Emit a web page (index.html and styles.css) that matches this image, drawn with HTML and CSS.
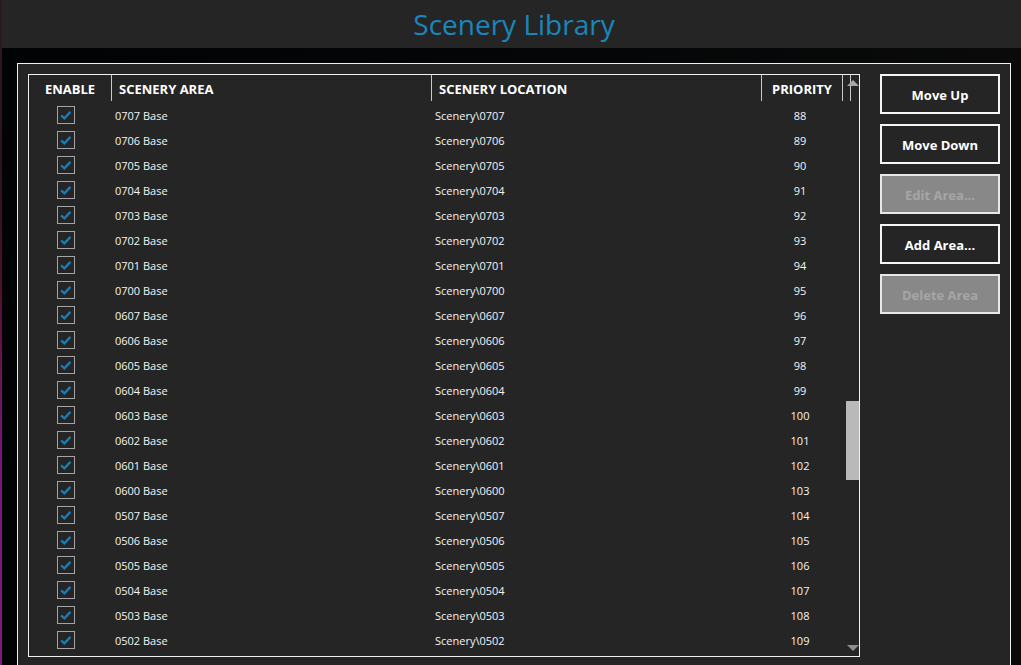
FILE: index.html
```html
<!DOCTYPE html>
<html lang="en">
<head>
<meta charset="utf-8">
<title>Scenery Library</title>
<link rel="stylesheet" href="styles.css">
</head>
<body>
<div class="window">
  <div class="edge"></div>
  <div class="main">
    <header class="titlebar"><h1 class="title">Scenery Library</h1></header>
    <div class="stage">
      <div class="panel">
        <div class="table">
          <div class="grid">
            <div class="thead">
              <div class="th center">ENABLE</div>
              <div class="th">SCENERY AREA</div>
              <div class="th">SCENERY LOCATION</div>
              <div class="th center">PRIORITY</div>
              <div class="th"></div>
            </div>
            <div class="tbody">
              <div class="tr"><div class="td chk"><span class="cb"><svg viewBox="0 0 18 18"><polyline points="3.5,9.5 7.2,12.8 14,5.5"/></svg></span></div><div class="td">0707 Base</div><div class="td">Scenery\0707</div><div class="td pri">88</div></div>
              <div class="tr"><div class="td chk"><span class="cb"><svg viewBox="0 0 18 18"><polyline points="3.5,9.5 7.2,12.8 14,5.5"/></svg></span></div><div class="td">0706 Base</div><div class="td">Scenery\0706</div><div class="td pri">89</div></div>
              <div class="tr"><div class="td chk"><span class="cb"><svg viewBox="0 0 18 18"><polyline points="3.5,9.5 7.2,12.8 14,5.5"/></svg></span></div><div class="td">0705 Base</div><div class="td">Scenery\0705</div><div class="td pri">90</div></div>
              <div class="tr"><div class="td chk"><span class="cb"><svg viewBox="0 0 18 18"><polyline points="3.5,9.5 7.2,12.8 14,5.5"/></svg></span></div><div class="td">0704 Base</div><div class="td">Scenery\0704</div><div class="td pri">91</div></div>
              <div class="tr"><div class="td chk"><span class="cb"><svg viewBox="0 0 18 18"><polyline points="3.5,9.5 7.2,12.8 14,5.5"/></svg></span></div><div class="td">0703 Base</div><div class="td">Scenery\0703</div><div class="td pri">92</div></div>
              <div class="tr"><div class="td chk"><span class="cb"><svg viewBox="0 0 18 18"><polyline points="3.5,9.5 7.2,12.8 14,5.5"/></svg></span></div><div class="td">0702 Base</div><div class="td">Scenery\0702</div><div class="td pri">93</div></div>
              <div class="tr"><div class="td chk"><span class="cb"><svg viewBox="0 0 18 18"><polyline points="3.5,9.5 7.2,12.8 14,5.5"/></svg></span></div><div class="td">0701 Base</div><div class="td">Scenery\0701</div><div class="td pri">94</div></div>
              <div class="tr"><div class="td chk"><span class="cb"><svg viewBox="0 0 18 18"><polyline points="3.5,9.5 7.2,12.8 14,5.5"/></svg></span></div><div class="td">0700 Base</div><div class="td">Scenery\0700</div><div class="td pri">95</div></div>
              <div class="tr"><div class="td chk"><span class="cb"><svg viewBox="0 0 18 18"><polyline points="3.5,9.5 7.2,12.8 14,5.5"/></svg></span></div><div class="td">0607 Base</div><div class="td">Scenery\0607</div><div class="td pri">96</div></div>
              <div class="tr"><div class="td chk"><span class="cb"><svg viewBox="0 0 18 18"><polyline points="3.5,9.5 7.2,12.8 14,5.5"/></svg></span></div><div class="td">0606 Base</div><div class="td">Scenery\0606</div><div class="td pri">97</div></div>
              <div class="tr"><div class="td chk"><span class="cb"><svg viewBox="0 0 18 18"><polyline points="3.5,9.5 7.2,12.8 14,5.5"/></svg></span></div><div class="td">0605 Base</div><div class="td">Scenery\0605</div><div class="td pri">98</div></div>
              <div class="tr"><div class="td chk"><span class="cb"><svg viewBox="0 0 18 18"><polyline points="3.5,9.5 7.2,12.8 14,5.5"/></svg></span></div><div class="td">0604 Base</div><div class="td">Scenery\0604</div><div class="td pri">99</div></div>
              <div class="tr"><div class="td chk"><span class="cb"><svg viewBox="0 0 18 18"><polyline points="3.5,9.5 7.2,12.8 14,5.5"/></svg></span></div><div class="td">0603 Base</div><div class="td">Scenery\0603</div><div class="td pri">100</div></div>
              <div class="tr"><div class="td chk"><span class="cb"><svg viewBox="0 0 18 18"><polyline points="3.5,9.5 7.2,12.8 14,5.5"/></svg></span></div><div class="td">0602 Base</div><div class="td">Scenery\0602</div><div class="td pri">101</div></div>
              <div class="tr"><div class="td chk"><span class="cb"><svg viewBox="0 0 18 18"><polyline points="3.5,9.5 7.2,12.8 14,5.5"/></svg></span></div><div class="td">0601 Base</div><div class="td">Scenery\0601</div><div class="td pri">102</div></div>
              <div class="tr"><div class="td chk"><span class="cb"><svg viewBox="0 0 18 18"><polyline points="3.5,9.5 7.2,12.8 14,5.5"/></svg></span></div><div class="td">0600 Base</div><div class="td">Scenery\0600</div><div class="td pri">103</div></div>
              <div class="tr"><div class="td chk"><span class="cb"><svg viewBox="0 0 18 18"><polyline points="3.5,9.5 7.2,12.8 14,5.5"/></svg></span></div><div class="td">0507 Base</div><div class="td">Scenery\0507</div><div class="td pri">104</div></div>
              <div class="tr"><div class="td chk"><span class="cb"><svg viewBox="0 0 18 18"><polyline points="3.5,9.5 7.2,12.8 14,5.5"/></svg></span></div><div class="td">0506 Base</div><div class="td">Scenery\0506</div><div class="td pri">105</div></div>
              <div class="tr"><div class="td chk"><span class="cb"><svg viewBox="0 0 18 18"><polyline points="3.5,9.5 7.2,12.8 14,5.5"/></svg></span></div><div class="td">0505 Base</div><div class="td">Scenery\0505</div><div class="td pri">106</div></div>
              <div class="tr"><div class="td chk"><span class="cb"><svg viewBox="0 0 18 18"><polyline points="3.5,9.5 7.2,12.8 14,5.5"/></svg></span></div><div class="td">0504 Base</div><div class="td">Scenery\0504</div><div class="td pri">107</div></div>
              <div class="tr"><div class="td chk"><span class="cb"><svg viewBox="0 0 18 18"><polyline points="3.5,9.5 7.2,12.8 14,5.5"/></svg></span></div><div class="td">0503 Base</div><div class="td">Scenery\0503</div><div class="td pri">108</div></div>
              <div class="tr"><div class="td chk"><span class="cb"><svg viewBox="0 0 18 18"><polyline points="3.5,9.5 7.2,12.8 14,5.5"/></svg></span></div><div class="td">0502 Base</div><div class="td">Scenery\0502</div><div class="td pri">109</div></div>
            </div>
          </div>
          <div class="scrollbar">
            <div class="arrow-box"><span class="arrow up"></span></div>
            <div class="track"><div class="thumb"></div></div>
            <div class="arrow-box"><span class="arrow down"></span></div>
          </div>
        </div>
        <div class="buttons">
          <button class="btn">Move Up</button>
          <button class="btn">Move Down</button>
          <button class="btn" disabled>Edit Area...</button>
          <button class="btn">Add Area...</button>
          <button class="btn" disabled>Delete Area</button>
        </div>
      </div>
    </div>
  </div>
</div>
</body>
</html>
```
FILE: styles.css
```css
* { box-sizing: border-box; }
html, body {
  margin: 0;
  height: 100%;
  overflow: hidden;
  background: #000;
}
body {
  font-family: "Open Sans", "Noto Sans", sans-serif;
  color: #f2f2f2;
}
.window {
  display: flex;
  height: 665px;
}
.edge {
  width: 2px;
  flex: none;
  background: linear-gradient(#2b1b1d 0, #2d1519 25%, #4a1226 42%, #6c1450 55%, #7a1680 70%, #7d1a84 100%);
}
.main {
  flex: 1;
  display: flex;
  flex-direction: column;
  min-width: 0;
}
.titlebar {
  height: 48px;
  flex: none;
  background: #252525;
  display: flex;
  justify-content: center;
  align-items: center;
}
.title {
  margin: 0 0 0 5px;
  font-weight: 400;
  font-size: 28px;
  line-height: 1;
  color: #1a86bd;
  padding-bottom: 1px;
}
.stage {
  flex: 1;
  background: linear-gradient(90deg, #020304 0, #040607 60%, #0a0a0a 100%);
  padding: 15px 10px 0 15px;
  min-height: 0;
}
.panel {
  border: 1px solid #f0f0f0;
  background: #252525;
  padding: 10px;
  display: flex;
  gap: 20px;
  align-items: flex-start;
  height: 620px;
}
.table {
  width: 832px;
  height: 583px;
  flex: none;
  border: 1px solid #f0f0f0;
  display: flex;
  overflow: hidden;
}
.grid {
  flex: 1;
  display: flex;
  flex-direction: column;
  min-width: 0;
}
.thead, .tr {
  display: grid;
  grid-template-columns: 83px 320px 330px 81px 1fr;
}
.thead {
  height: 28px;
  flex: none;
}
.th {
  height: 26px;
  border-right: 1px solid #c8c8c8;
  font-size: 13px;
  font-weight: 700;
  color: #fff;
  display: flex;
  align-items: center;
  padding-left: 7px;
  padding-top: 1px;
  white-space: nowrap;
}
.th.center {
  justify-content: center;
  padding-left: 0;
}
.tbody {
  flex: 1;
  overflow: hidden;
}
.tr {
  height: 25px;
}
.td {
  font-size: 11px;
  display: flex;
  align-items: center;
  padding-left: 3px;
  white-space: nowrap;
  color: #f4f4f4;
}
.td.chk {
  padding-left: 28px;
}
.td.pri {
  justify-content: center;
  padding-left: 0;
  padding-right: 5px;
}
.cb {
  width: 18px;
  height: 18px;
  border: 1px solid #a3a3a3;
  display: block;
  margin-top: -1px;
}
.cb svg {
  display: block;
  width: 16px;
  height: 16px;
}
.cb polyline {
  fill: none;
  stroke: #1a7bb6;
  stroke-width: 2.6;
  stroke-linecap: butt;
  stroke-linejoin: miter;
}
.scrollbar {
  width: 14px;
  flex: none;
  display: flex;
  flex-direction: column;
}
.arrow-box {
  height: 17px;
  flex: none;
  display: flex;
  align-items: center;
  justify-content: center;
}
.arrow {
  width: 0;
  height: 0;
  border-left: 6px solid transparent;
  border-right: 6px solid transparent;
  margin-left: 1px;
}
.arrow.up {
  border-bottom: 6px solid #a8a8a8;
  margin-top: -1px;
}
.arrow.down {
  border-top: 6px solid #8e8e8e;
  margin-top: 1px;
}
.track {
  flex: 1;
}
.thumb {
  margin: 309px 0 0 1px;
  height: 79px;
  background: #b9b9b9;
}
.buttons {
  width: 120px;
  flex: none;
  display: flex;
  flex-direction: column;
  gap: 10px;
}
.btn {
  height: 40px;
  border: 2px solid #f5f5f5;
  background: #252525;
  color: #fff;
  font-family: "Open Sans", "Noto Sans", sans-serif;
  font-size: 13px;
  font-weight: 700;
  padding: 2px 0 0;
}
.btn:disabled {
  background: #888888;
  color: #a6a6a6;
  border-color: #e8e8e8;
}
```
